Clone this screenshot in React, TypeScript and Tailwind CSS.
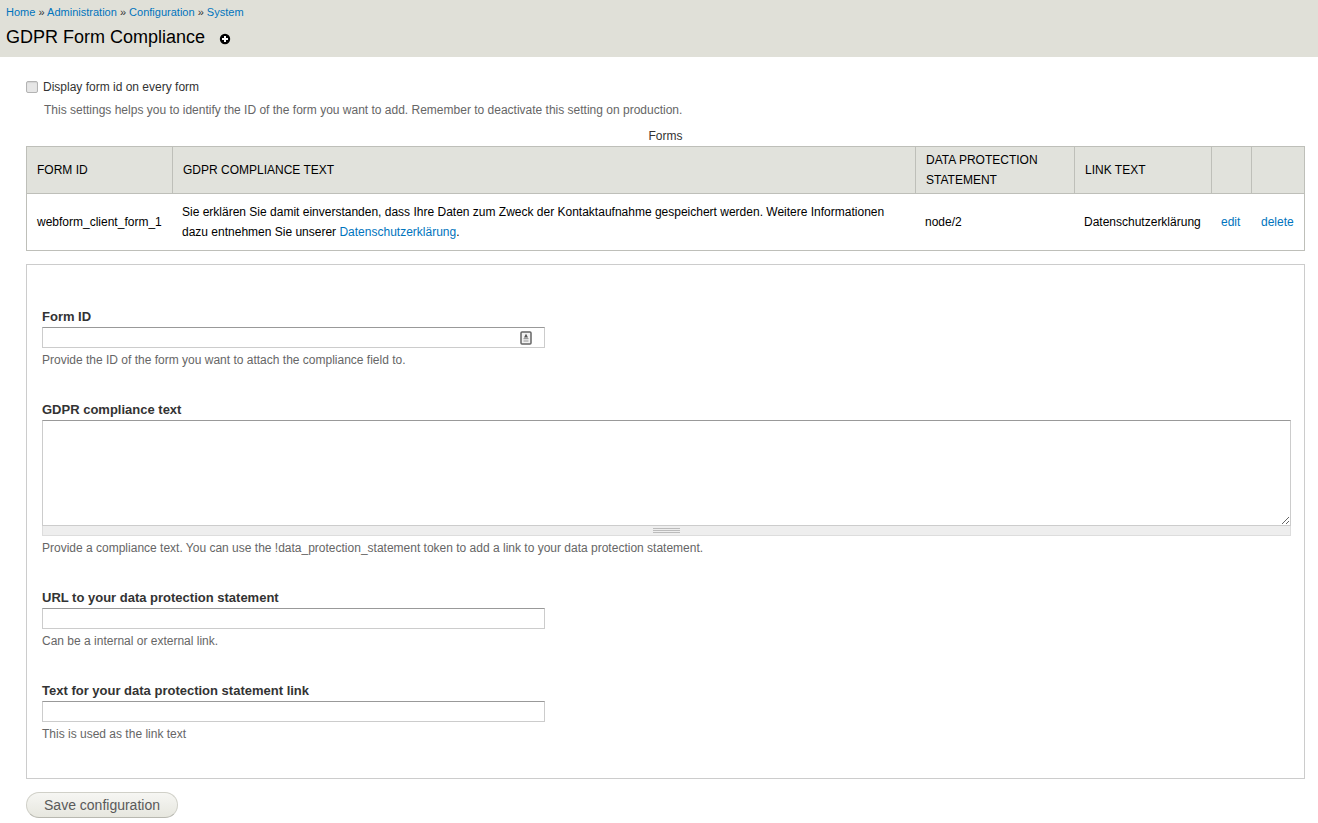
const link = "text-[#0074bd]";

function Breadcrumb() {
  const items = ["Home", "Administration", "Configuration", "System"];
  return (
    <div className="text-[11.03px] leading-[14px] text-[#333]">
      {items.map((item, i) => (
        <span key={item}>
          {i > 0 && " » "}
          <a className={link}>{item}</a>
        </span>
      ))}
    </div>
  );
}

function Field({ label, help, className }: { label: string; help: string; className: string }) {
  return (
    <div className={className}>
      <label className="block text-[13px] leading-[16px] font-bold text-[#333] mb-[2px]">{label}</label>
      <input className="block w-[503px] h-[21px] bg-white border border-[#ccc] border-t-[#999]" />
      <p className="mt-[4px] text-[12px] leading-[16px] text-[#666]">{help}</p>
    </div>
  );
}

export default function App() {
  return (
    <div className="min-h-[823px] bg-white font-['Liberation_Sans',Arial,sans-serif] text-[12px]">
      {/* Header */}
      <div className="h-[57px] bg-[#e0e0d8] pl-[6px] pt-[5px]">
        <Breadcrumb />
        <div className="mt-[6px] flex items-center">
          <h1 className="text-[18px] leading-[24px] font-normal text-black">GDPR Form Compliance</h1>
          <svg className="ml-[14px] mt-[4px]" width="12" height="12" viewBox="0 0 12 12">
            <circle cx="6" cy="6" r="5.2" fill="#000" />
            <path d="M6 3v6M3 6h6" stroke="#fff" strokeWidth="2" />
          </svg>
        </div>
      </div>

      <div className="pl-[26px] pr-[13px]">
        {/* Display form id */}
        <div className="pt-[23px]">
          <label className="flex items-center h-[14px] text-[12px] text-[#333]">
            <span className="w-[12px] h-[12px] rounded-[2px] border border-[#b3b3b3] bg-[#e6e6e6] shadow-[inset_0_1px_1px_rgba(0,0,0,0.08)]" />
            <span className="ml-[5px]">Display form id on every form</span>
          </label>
          <p className="mt-[8px] ml-[18px] text-[12px] leading-[16px] text-[#666]">
            This settings helps you to identify the ID of the form you want to add. Remember to deactivate this setting on production.
          </p>
        </div>

        {/* Forms table */}
        <table className="mt-[8px] w-full table-fixed border-collapse text-black">
          <caption className="h-[20px] text-[12px] leading-[20px] text-[#333]">Forms</caption>
          <colgroup>
            <col className="w-[146px]" />
            <col className="w-[743px]" />
            <col className="w-[159px]" />
            <col className="w-[137px]" />
            <col className="w-[40px]" />
            <col />
          </colgroup>
          <thead>
            <tr className="h-[47px] bg-[#e1e2dc] text-left text-[12px] leading-[20px] font-normal">
              <th className="border border-[#bebfb9] px-[10px] font-normal">FORM ID</th>
              <th className="border border-[#bebfb9] px-[10px] font-normal">GDPR COMPLIANCE TEXT</th>
              <th className="border border-[#bebfb9] px-[10px] font-normal">DATA PROTECTION STATEMENT</th>
              <th className="border border-[#bebfb9] px-[10px] font-normal">LINK TEXT</th>
              <th className="border border-[#bebfb9]" />
              <th className="border border-[#bebfb9]" />
            </tr>
          </thead>
          <tbody>
            <tr className="h-[57px] text-[12px] leading-[20px]">
              <td className="border-y border-l border-[#bebfb9] pl-[10px]">webform_client_form_1</td>
              <td className="border-y border-[#bebfb9] pl-[9.5px] pr-[20px]">
                Sie erklären Sie damit einverstanden, dass Ihre Daten zum Zweck der Kontaktaufnahme gespeichert werden. Weitere Informationen dazu entnehmen Sie unserer <a className={link}>Datenschutzerklärung</a>.
              </td>
              <td className="border-y border-[#bebfb9] pl-[9.5px]">node/2</td>
              <td className="border-y border-[#bebfb9] pl-[9.5px]">Datenschutzerklärung</td>
              <td className="border-y border-[#bebfb9] pl-[9.5px]"><a className={link}>edit</a></td>
              <td className="border-y border-r border-[#bebfb9] pl-[9.5px]"><a className={link}>delete</a></td>
            </tr>
          </tbody>
        </table>

        {/* Add form */}
        <div className="mt-[13px] h-[515px] border border-[#ccc] pl-[15px] pr-[13px] pt-[44px]">
          <div className="relative">
            <Field
              className=""
              label="Form ID"
              help="Provide the ID of the form you want to attach the compliance field to."
            />
            <svg className="absolute left-[478px] top-[22px]" width="12" height="14" viewBox="0 0 12 14">
              <rect x="1" y="1" width="10" height="12" rx="1" fill="#f2f2f2" stroke="#666" strokeWidth="1.5" />
              <path d="M6 2.8 8 6.4H4z" fill="#555" />
              <rect x="3.5" y="7.2" width="5" height="1" fill="#888" />
              <rect x="3.5" y="9" width="5" height="2" fill="#c4c4c4" />
            </svg>
          </div>

          <div className="mt-[34px]">
            <label className="block text-[13px] leading-[16px] font-bold text-[#333] mb-[2px]">GDPR compliance text</label>
            <textarea className="block w-full h-[106px] bg-white border border-[#ccc] border-t-[#999] resize-y" />
            <div className="flex h-[10px] items-center justify-center border border-t-0 border-[#ddd] bg-[#eee]">
              <div className="h-[5px] w-[27px] border-y border-[#bbb] relative after:absolute after:left-0 after:right-0 after:top-[1px] after:h-[1px] after:bg-[#bbb]" />
            </div>
            <p className="mt-[4px] text-[12px] leading-[16px] text-[#666]">
              Provide a compliance text. You can use the !data_protection_statement token to add a link to your data protection statement.
            </p>
          </div>

          <Field
            className="mt-[34px]"
            label="URL to your data protection statement"
            help="Can be a internal or external link."
          />
          <Field
            className="mt-[34px]"
            label="Text for your data protection statement link"
            help="This is used as the link text"
          />
        </div>

        <button className="mt-[13px] block h-[26px] w-[152px] rounded-[13px] border border-[#d0d0c8] border-b-[#b8b8b0] bg-gradient-to-b from-[#f6f6f3] to-[#e7e7df] text-[14px] text-[#5a5a5a]">
          Save configuration
        </button>
      </div>
    </div>
  );
}
